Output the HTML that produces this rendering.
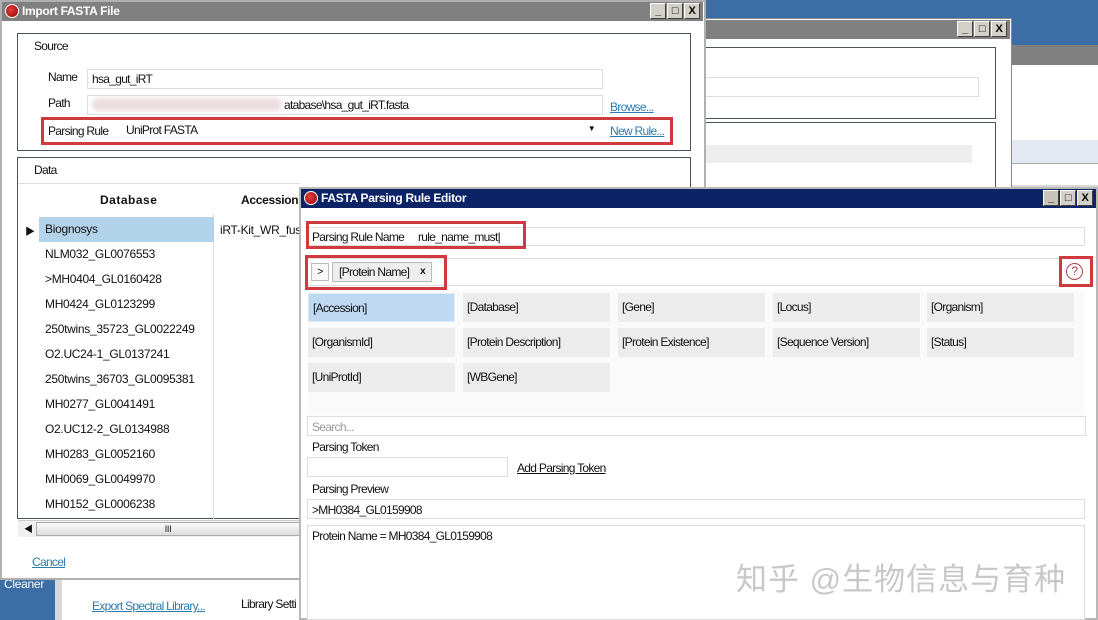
<!DOCTYPE html>
<html><head><meta charset="utf-8"><style>
*{box-sizing:border-box;margin:0;padding:0}
body{width:1098px;height:620px;overflow:hidden;position:relative;background:#d8d8d8;font-family:"Liberation Sans","Noto Sans CJK SC",sans-serif;font-size:11px;color:#111;letter-spacing:-0.3px}
.a{position:absolute}
.tb{position:absolute;height:19px;color:#fff;font-weight:bold;font-size:12px;line-height:19px;padding-left:20px}
.btns{position:absolute;right:3px;top:1px;display:flex;gap:1px}
.btns span{width:16px;height:16px;background:#d4d0c8;border:1px solid #fff;border-right-color:#404040;border-bottom-color:#404040;font-size:11px;color:#000;line-height:14px;text-align:center;font-weight:bold}
.ico{position:absolute;left:3px;top:2px;width:14px;height:14px;border-radius:50%;background:radial-gradient(circle at 40% 40%,#e04040,#900);border:1px solid #fff}
.in{position:absolute;background:#fff;border:1px solid #ddd}
.link{color:#2a7bb0;text-decoration:underline}
.red{position:absolute;border:3px solid #d0393e}
.chip{position:absolute;background:#ececec;height:29px;line-height:29px;padding-left:4px;width:147px}
.row{position:absolute;left:45px;height:25px;line-height:25px;font-size:12px}
.ed{font-size:12px;letter-spacing:-0.7px}
</style></head><body>
<div class="a" style="left:700px;top:0;width:398px;height:48px;background:#3a6ea5"></div>
<div class="a" style="left:1010px;top:45px;width:88px;height:20px;background:#808080"></div>
<div class="a" style="left:1010px;top:65px;width:88px;height:120px;background:#fff"></div>
<div class="a" style="left:1010px;top:140px;width:88px;height:24px;background:#e2e9f2;border-bottom:1px solid #aaa"></div>
<div class="a" style="left:700px;top:18px;width:312px;height:175px;background:#fff;border:1px solid #888"></div>
<div class="tb" style="left:700px;top:20px;width:310px;background:#808080"><div class="btns"><span>_</span><span>□</span><span>X</span></div></div>
<div class="a" style="left:700px;top:47px;width:296px;height:72px;border:1px solid #4a5560"></div>
<div class="in" style="left:700px;top:77px;width:279px;height:20px"></div>
<div class="a" style="left:700px;top:122px;width:296px;height:70px;border:1px solid #4a5560"></div>
<div class="a" style="left:700px;top:145px;width:272px;height:18px;background:#eee"></div>
<div class="a" style="left:0;top:575px;width:55px;height:45px;background:#3a6ea5;color:#fff;font-size:12px;padding:2px 4px">Cleaner</div>
<div class="a" style="left:62px;top:575px;width:240px;height:45px;background:#fff"></div>
<div class="a ed" style="left:92px;top:599px"><span class="link">Export Spectral Library...</span></div>
<div class="a ed" style="left:241px;top:597px">Library Setti</div>
<div class="a" style="left:0;top:0;width:706px;height:580px;background:#fff;border:2px solid #b0b0b0"></div>
<div class="tb" style="left:2px;top:2px;width:701px;background:#808080">Import FASTA File<div class="btns"><span>_</span><span>□</span><span>X</span></div><div class="ico"></div></div>
<div class="a" style="left:17px;top:33px;width:674px;height:118px;border:1px solid #4a5560"></div>
<div class="a ed" style="left:34px;top:39px">Source</div>
<div class="a ed" style="left:48px;top:70px">Name</div>
<div class="in ed" style="left:87px;top:69px;width:516px;height:20px;padding:2px 4px">hsa_gut_iRT</div>
<div class="a ed" style="left:48px;top:96px">Path</div>
<div class="in ed" style="left:87px;top:95px;width:516px;height:20px;padding:2px 4px 0 196px">atabase\hsa_gut_iRT.fasta</div>
<div class="a" style="left:92px;top:98px;width:190px;height:13px;background:#ecdde0;border-radius:6px;filter:blur(2px)"></div>
<div class="a ed" style="left:610px;top:100px"><span class="link">Browse...</span></div>
<div class="a ed" style="left:48px;top:124px">Parsing Rule</div>
<div class="in ed" style="left:123px;top:121px;width:480px;height:20px;padding:2px 3px;border:none">UniProt FASTA<span style="position:absolute;right:8px;top:3px;font-size:8px">▼</span></div>
<div class="a ed" style="left:610px;top:124px"><span class="link">New Rule...</span></div>
<div class="red" style="left:41px;top:117px;width:632px;height:28px"></div>
<div class="a" style="left:17px;top:157px;width:674px;height:362px;border:1px solid #4a5560"></div>
<div class="a ed" style="left:34px;top:163px">Data</div>
<div class="a" style="left:18px;top:183px;width:282px;height:1px;background:#ddd"></div>
<div class="a" style="left:100px;top:193px;font-size:12px;font-weight:bold;letter-spacing:0.5px">Database</div>
<div class="a" style="left:241px;top:193px;font-size:12px;font-weight:bold">Accession</div>
<div class="a" style="left:213px;top:214px;width:1px;height:305px;background:#ddd"></div>
<div class="a" style="left:39px;top:217px;width:175px;height:25px;background:#b3d3ea"></div>
<div class="a" style="left:25px;top:223px;font-size:10px">▶</div>
<div class="row" style="top:217px">Biognosys</div>
<div class="a" style="left:220px;top:223px;font-size:12px">iRT-Kit_WR_fus</div>
<div class="row" style="top:242px">NLM032_GL0076553</div>
<div class="row" style="top:267px">&gt;MH0404_GL0160428</div>
<div class="row" style="top:292px">MH0424_GL0123299</div>
<div class="row" style="top:317px">250twins_35723_GL0022249</div>
<div class="row" style="top:342px">O2.UC24-1_GL0137241</div>
<div class="row" style="top:367px">250twins_36703_GL0095381</div>
<div class="row" style="top:392px">MH0277_GL0041491</div>
<div class="row" style="top:417px">O2.UC12-2_GL0134988</div>
<div class="row" style="top:442px">MH0283_GL0052160</div>
<div class="row" style="top:467px">MH0069_GL0049970</div>
<div class="row" style="top:492px">MH0152_GL0006238</div>
<div class="a" style="left:18px;top:520px;width:282px;height:17px;background:#f0f0f0;border-top:1px solid #ccc"></div>
<div class="a" style="left:36px;top:522px;width:264px;height:14px;background:linear-gradient(#fafafa,#ddd);border:1px solid #aaa;text-align:center;font-size:9px;line-height:12px">III</div>
<div class="a" style="left:24px;top:522px;font-size:9px">◀</div>
<div class="a ed" style="left:32px;top:555px"><span class="link">Cancel</span></div>
<div class="a" style="left:299px;top:187px;width:799px;height:433px;background:#fff;border:2px solid #b8b8b8"></div>
<div class="tb" style="left:301px;top:189px;width:795px;background:#0c2366">FASTA Parsing Rule Editor<div class="btns"><span style="background:#c8c4b8">_</span><span>□</span><span>X</span></div><div class="ico"></div></div>
<div class="in" style="left:307px;top:227px;width:778px;height:19px"></div>
<div class="a ed" style="left:312px;top:230px">Parsing Rule Name</div>
<div class="a ed" style="left:418px;top:230px">rule_name_must|</div>
<div class="red" style="left:306px;top:221px;width:220px;height:28px"></div>
<div class="a" style="left:307px;top:258px;width:778px;height:28px;border-top:1px solid #ddd;border-bottom:1px solid #ddd"></div>
<div class="a" style="left:311px;top:263px;width:18px;height:18px;border:1px solid #bbb;background:#fafafa;text-align:center;line-height:16px">&gt;</div>
<div class="a ed" style="left:332px;top:262px;width:100px;height:20px;border:1px solid #bbb;background:#eee;line-height:18px;padding-left:6px">[Protein Name]<span style="position:absolute;right:6px;font-size:10px;font-weight:bold">x</span></div>
<div class="red" style="left:305px;top:255px;width:142px;height:35px"></div>
<div class="a" style="left:1066px;top:263px;width:17px;height:17px;border:1px solid #b04050;border-radius:50%;color:#b04050;text-align:center;line-height:15px;font-size:12px">?</div>
<div class="red" style="left:1059px;top:256px;width:34px;height:31px"></div>
<div class="a" style="left:307px;top:290px;width:778px;height:125px;background:#fafafa"></div>
<div class="chip ed" style="left:308px;top:293px;background:#bfd9f2;border:1px solid #e0ecf8">[Accession]</div>
<div class="chip ed" style="left:463px;top:293px">[Database]</div>
<div class="chip ed" style="left:618px;top:293px">[Gene]</div>
<div class="chip ed" style="left:773px;top:293px">[Locus]</div>
<div class="chip ed" style="left:927px;top:293px">[Organism]</div>
<div class="chip ed" style="left:308px;top:328px">[OrganismId]</div>
<div class="chip ed" style="left:463px;top:328px">[Protein Description]</div>
<div class="chip ed" style="left:618px;top:328px">[Protein Existence]</div>
<div class="chip ed" style="left:773px;top:328px">[Sequence Version]</div>
<div class="chip ed" style="left:927px;top:328px">[Status]</div>
<div class="chip ed" style="left:308px;top:363px">[UniProtId]</div>
<div class="chip ed" style="left:463px;top:363px">[WBGene]</div>
<div class="in ed" style="left:307px;top:416px;width:779px;height:20px;padding:3px 4px;color:#999">Search...</div>
<div class="a ed" style="left:312px;top:440px">Parsing Token</div>
<div class="in" style="left:307px;top:457px;width:201px;height:20px"></div>
<div class="a ed" style="left:517px;top:461px"><span style="text-decoration:underline">Add Parsing Token</span></div>
<div class="a ed" style="left:312px;top:482px">Parsing Preview</div>
<div class="in ed" style="left:307px;top:499px;width:778px;height:20px;padding:3px 4px">&gt;MH0384_GL0159908</div>
<div class="in ed" style="left:307px;top:525px;width:778px;height:95px;padding:3px 4px">Protein Name = MH0384_GL0159908</div>
<div class="a" style="left:736px;top:554px;font-size:31px;color:#c8c8c8;letter-spacing:1px">知乎 @生物信息与育种</div>
</body></html>
